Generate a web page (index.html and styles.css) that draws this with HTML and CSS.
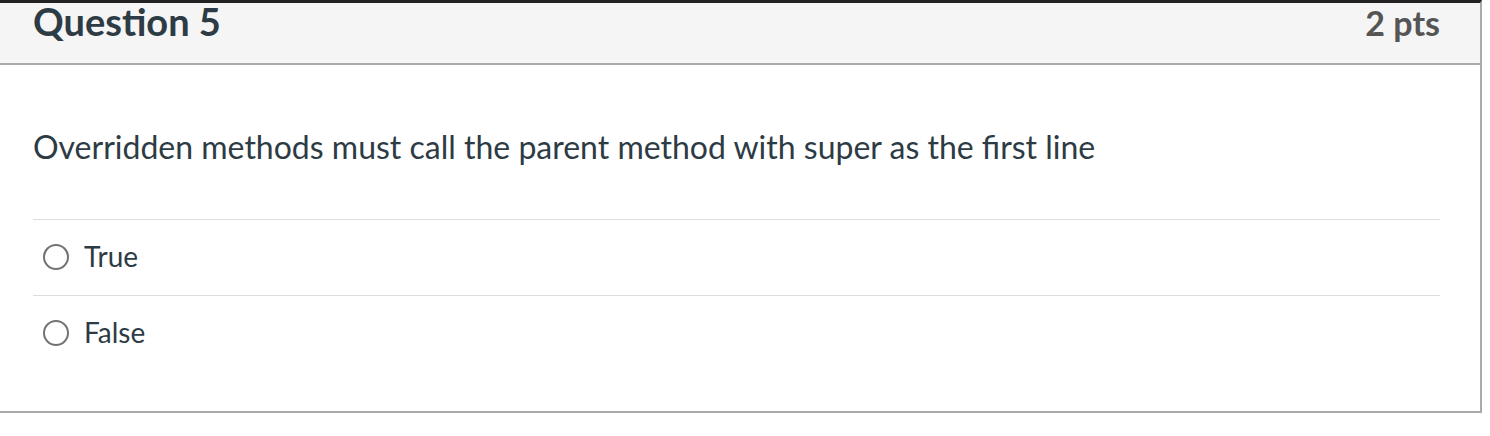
FILE: index.html
```html
<!DOCTYPE html>
<html>
<head>
<meta charset="utf-8">
<link rel="stylesheet" href="styles.css">
</head>
<body>
<div class="card">
  <div class="header">
    <span class="title">Question 5</span>
    <span class="pts">2 pts</span>
  </div>
  <div class="body">
    <p class="question">Overridden methods must call the parent method with super as the first line</p>
    <div class="answers">
      <label class="answer"><span class="radio"></span><span class="label">True</span></label>
      <label class="answer"><span class="radio"></span><span class="label">False</span></label>
    </div>
  </div>
</div>
</body>
</html>
```
FILE: styles.css
```css
html, body {
  margin: 0;
  padding: 0;
  background: #fff;
  font-family: Lato, "Liberation Sans", sans-serif;
}
.card {
  width: 1480px;
  border-top: 3px solid #222;
  border-right: 2px solid #aaa;
  border-bottom: 2px solid #aaa;
  box-sizing: content-box;
}
.header {
  background: #f5f5f5;
  height: 60px;
  border-bottom: 2px solid #aaa;
  display: flex;
  justify-content: space-between;
  align-items: flex-start;
  padding: 0 40px 0 33px;
}
.title {
  font-weight: 700;
  font-size: 38px;
  color: #2d3b45;
  line-height: 44px;
  margin-top: -4px;
}
.pts {
  font-weight: 700;
  font-size: 34px;
  color: #555;
  line-height: 44px;
  margin-top: -2px;
}
.body {
  padding: 63px 40px 0 33px;
  height: 346px;
  box-sizing: border-box;
}
.question {
  margin: 0;
  font-size: 32px;
  line-height: 38px;
  color: #2d3b45;
}
.answers {
  margin-top: 53px;
}
.answer {
  display: flex;
  align-items: center;
  border-top: 1px solid #ddd;
  height: 75px;
  padding-left: 10px;
}
.radio {
  width: 26px;
  height: 26px;
  border: 2px solid #737373;
  border-radius: 50%;
  box-sizing: border-box;
  margin-top: -1px;
}
.label {
  margin-left: 15px;
  font-size: 28px;
  color: #2d3b45;
  margin-top: -4px;
}
```
